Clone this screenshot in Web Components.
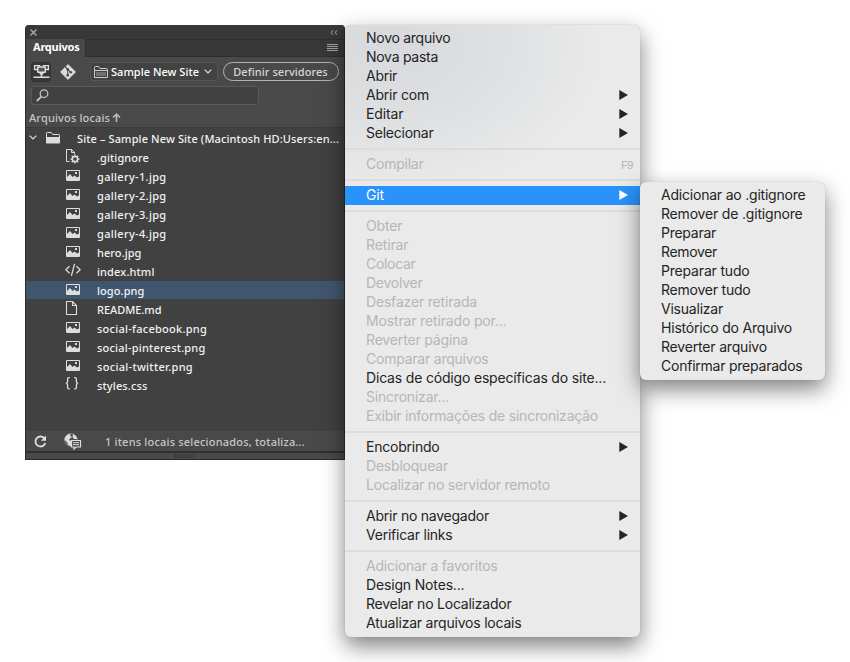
<!DOCTYPE html>
<html lang="pt-BR">
<head>
<meta charset="utf-8">
<title>Arquivos</title>
<style>
body { margin: 0; background: #fff; width: 850px; height: 662px; overflow: hidden; position: relative; }
files-panel { position: absolute; left: 25px; top: 25px; }
context-menu { position: absolute; left: 345px; top: 25px; width: 295px; }
context-menu.sub { left: 640px; top: 182px; width: 185px; }
</style>
</head>
<body>
<files-panel></files-panel>
<context-menu id="main" class="tinted"></context-menu>
<context-menu id="git" class="sub"></context-menu>
<script>
const ICONS = {
  folder: '<svg width="16" height="14" viewBox="0 0 16 14"><path d="M1.500 8V2.300q0-.8.8-.8h4l1.400 2h6q.8 0 .8.800V8" fill="none" stroke="#ddd"/><path d="M1 6h14v5.500q0 1-1 1H2q-1 0-1-1z" fill="#ddd"/></svg>',
  image: '<svg width="14" height="11" viewBox="0 0 14 11"><path d="M.5.5h13v10H.5z" fill="none" stroke="#ddd"/><path d="M1 10V7l3-3 2.500 3L8.500 5.600 11 7.500l2-1V10z" fill="#ddd"/><path d="M9 2h2v2H9z" fill="#ddd"/></svg>',
  gear: '<svg width="15" height="15" viewBox="0 0 15 15"><path d="M4.500 12.500H1.500V.5h5l3 3V5M6.500.5v3h3" fill="none" stroke="#ddd"/><circle cx="10" cy="10" r="2.600" fill="none" stroke="#ddd" stroke-width="1.500"/><path d="M10 5.500V7M10 13v1.500M5.500 10H7M13 10h1.500M6.800 6.800l1.100 1.100M12.100 12.100l1.100 1.100M13.200 6.800l-1.100 1.100M7.900 12.100l-1.100 1.100" stroke="#ddd" stroke-width="1.500"/></svg>',
  code: '<svg width="16" height="14" viewBox="0 0 16 14"><path d="M4.500 3.300L.9 6.800l3.600 3.500M11.500 3.300l3.600 3.500-3.600 3.500M9.600.8L6.400 12.800" fill="none" stroke="#ddd" stroke-width="1.300"/></svg>',
  doc: '<svg width="13" height="14" viewBox="0 0 13 14"><path d="M1.500.5h6l4 4v9h-10zM7.500.5v4h4" fill="none" stroke="#ddd" stroke-width="1.100"/></svg>',
  css: '<svg width="14" height="13" viewBox="0 0 14 13"><path d="M4.800.7H3.900Q2.600.7 2.600 2v2.700Q2.600 6.200.9 6.300q1.700.2 1.700 1.700v2.500q0 1.400 1.300 1.400h.9M9.200.7h.9q1.300 0 1.300 1.300v2.700q0 1.500 1.700 1.600-1.700.2-1.700 1.700v2.500q0 1.400-1.300 1.400h-.9" fill="none" stroke="#ddd" stroke-width="1.300"/></svg>',
  server: '<svg width="17" height="15" viewBox="0 0 17 15"><path d="M4 5.500H1.600V1.600h5V2.500M13 5.500h2.400V1.600h-5V2.500" fill="none" stroke="#ddd" stroke-width="1.300"/><rect x="4.700" y="3" width="7.600" height="5.200" rx=".5" fill="#555" stroke="#ddd" stroke-width="1.500"/><path d="M6 8.500h5l-1 2H7z" fill="#ddd"/><path d="M8.500 9v4M.5 13.300h16" stroke="#ddd" stroke-width="1.600"/></svg>',
  git: '<svg width="16" height="16" viewBox="0 0 16 16"><path d="M8 .4L15.600 8 8 15.600.4 8z" fill="#ddd" stroke="#ddd" stroke-width=".6" stroke-linejoin="round"/><path d="M5.200 2.600l2.500 2.500v6.200M7.700 5.300l3 2.900" fill="none" stroke="#494949" stroke-width="1.100"/><circle cx="7.700" cy="5.300" r="1.300" fill="#494949"/><circle cx="7.700" cy="11.200" r="1.300" fill="#494949"/><circle cx="10.800" cy="8.200" r="1.300" fill="#494949"/></svg>',
  outline: '<svg width="14" height="12" viewBox="0 0 14 12"><path d="M.5 11.500V1.500q0-1 1-1h3.200l1.300 2h6.500q1 0 1 1v8zM.5 4.500h13" fill="none" stroke="#ccc"/><path d="M2 6h10v4H2z" fill="#707070"/></svg>',
  chevron: '<svg width="8" height="5" viewBox="0 0 8 5"><path d="M.7.6L4 3.900 7.300.6" fill="none" stroke="#ddd" stroke-width="1.200"/></svg>',
  search: '<svg width="13" height="13" viewBox="0 0 13 13"><circle cx="8" cy="4.700" r="3.800" fill="none" stroke="#c4c4c4" stroke-width="1.300"/><path d="M5.300 7.600L.8 12" stroke="#c4c4c4" stroke-width="1.800"/></svg>',
  up: '<svg width="9" height="9" viewBox="0 0 9 9"><path d="M4.500 9V1.500M1 4.500l3.500-3.300L8 4.500" fill="none" stroke="#bbb" stroke-width="1.600"/></svg>',
  refresh: '<svg width="13" height="13" viewBox="0 0 13 13"><path d="M10.600 3.600A5 5 0 1 0 11.300 8" fill="none" stroke="#ddd" stroke-width="1.800"/><path d="M12 .6v5.200H6.900z" fill="#ddd"/></svg>',
  globe: '<svg width="18" height="17" viewBox="0 0 18 17"><circle cx="7" cy="7" r="6.300" fill="#505050" stroke="#999" stroke-width=".7"/><path d="M.8 4.500L3.500 1.500 6.500.6l-.6 2L8 4 6 5.500 5 7 7 8v5.300L4 12 3 9 .6 7zM9 1l3 2 1.400 3H10L8.500 4z" fill="#ddd"/><path d="M7.500 7.500h9v6.500h-4.300L10 16v-2H7.500z" fill="#494949" stroke="#ddd" stroke-width="1.200"/><path d="M9 9.700h6M9 11.700h6" stroke="#ddd"/></svg>'
};

/* A single line of text whose tracking is adjusted to fill the width in "w". */
class FitLabel extends HTMLElement {
  connectedCallback() {
    if (!this.shadowRoot) this.attachShadow({ mode: 'open' }).innerHTML =
      '<style>:host{display:inline-block;white-space:nowrap;flex:none}span{display:inline-block;white-space:nowrap}</style><span></span>';
    const text = this.getAttribute('text'), span = this.shadowRoot.querySelector('span');
    span.textContent = text;
    const w = +this.getAttribute('w');
    if (w) {
      span.style.letterSpacing = (w - span.getBoundingClientRect().width) / text.length + 'px';
      span.style.width = w + 1 + 'px';
    }
  }
}
customElements.define('fit-label', FitLabel);

class MenuItem extends HTMLElement {
  connectedCallback() {
    const a = n => this.getAttribute(n) || '';
    this.attachShadow({ mode: 'open' }).innerHTML = `<style>
      :host{display:flex;height:19px;align-items:flex-start;padding:0 6px 0 21px;box-sizing:border-box;color:#242424}
      :host([disabled]){color:#b6b6b6}
      :host([selected]){background:#2a93fb;color:#fff}
      fit-label{line-height:17px}
      .end{margin-left:auto;display:flex;font-size:11px}
      .end fit-label{line-height:20px}
      svg{margin:4px 6px 0 0}
    </style><fit-label text="${a('label')}" w="${a('w')}"></fit-label>
    <span class="end">${a('key') ? `<fit-label text="${a('key')}" w="12"></fit-label>` : ''}${this.hasAttribute('more') ? '<svg width="9" height="10" viewBox="0 0 9 10"><path d="M.3 0L9 5 .3 10z" fill="currentColor"/></svg>' : ''}</span>`;
  }
}
customElements.define('menu-item', MenuItem);

class MenuDivider extends HTMLElement {
  connectedCallback() {
    this.attachShadow({ mode: 'open' }).innerHTML =
      '<style>:host{display:block;height:12px;padding-top:5px;box-sizing:border-box}i{display:block;height:2px;background:#dcdcdc}</style><i></i>';
  }
}
customElements.define('menu-divider', MenuDivider);

const MENUS = {
  main: [['Novo arquivo', 84.5], ['Nova pasta', 72], ['Abrir', 31], ['Abrir com', 63, 'more'], ['Editar', 37.5, 'more'], ['Selecionar', 67.5, 'more'], 0,
    ['Compilar', 57.5, 'disabled key="F9"'], 0, ['Git', 18, 'selected more'], 0,
    ['Obter', 36.5, 'disabled'], ['Retirar', 42.5, 'disabled'], ['Colocar', 49.5, 'disabled'], ['Devolver', 56.5, 'disabled'],
    ['Desfazer retirada', 111, 'disabled'], ['Mostrar retirado por...', 140.5, 'disabled'], ['Reverter página', 102, 'disabled'],
    ['Comparar arquivos', 122.5, 'disabled'], ['Dicas de código específicas do site...', 240], ['Sincronizar...', 83, 'disabled'],
    ['Exibir informações de sincronização', 232, 'disabled'], 0,
    ['Encobrindo', 73.5, 'more'], ['Desbloquear', 82, 'disabled'], ['Localizar no servidor remoto', 184, 'disabled'], 0,
    ['Abrir no navegador', 123, 'more'], ['Verificar links', 86.5, 'more'], 0,
    ['Adicionar a favoritos', 131.5, 'disabled'], ['Design Notes...', 98.5], ['Revelar no Localizador', 145.5], ['Atualizar arquivos locais', 155.5]],
  git: [['Adicionar ao .gitignore', 144.5], ['Remover de .gitignore', 141.5], ['Preparar', 55], ['Remover', 56], ['Preparar tudo', 88.5],
    ['Remover tudo', 89.5], ['Visualizar', 62], ['Histórico do Arquivo', 131], ['Reverter arquivo', 106], ['Confirmar preparados', 141.5]]
};
class ContextMenu extends HTMLElement {
  connectedCallback() {
    this.attachShadow({ mode: 'open' }).innerHTML = `<style>
      :host{display:block;box-sizing:border-box;padding:4px 0;border-radius:6px;background:#eaeaea;
        font:14px Inter,"Liberation Sans",sans-serif;box-shadow:0 9px 22px rgba(0,0,0,.5),0 0 1px rgba(0,0,0,.25)}
      :host(.tinted){background:radial-gradient(ellipse 210px 150px at 50px 20px,#d7d9dc 0,#dddfe1 45%,#eaeaea 100%) #eaeaea}
    </style>` + MENUS[this.id].map(r => r ? `<menu-item label="${r[0]}" w="${r[1]}" ${r[2] || ''}></menu-item>` : '<menu-divider></menu-divider>').join('');
  }
}
customElements.define('context-menu', ContextMenu);

class FileRow extends HTMLElement {
  connectedCallback() {
    const a = n => this.getAttribute(n) || '';
    const root = this.hasAttribute('root');
    this.attachShadow({ mode: 'open' }).innerHTML = `<style>
      :host{display:grid;grid-template-columns:${root ? '19px 32px' : a('icon') === 'image' ? '40px 31px' : '39px 32px'} 1fr;height:19px;color:#f2f2f2}
      :host([selected]){background:linear-gradient(#40566e,#40566e) 0 0/100% 18px no-repeat}
      .tw{padding:6px 0 0 3px;line-height:0}.ic{line-height:0;padding-top:${a('dy') || 3}px}
      fit-label{line-height:20px}
      svg{display:block}
    </style><span class="tw">${root ? ICONS.chevron : ''}</span><span class="ic">${ICONS[a('icon')]}</span><fit-label text="${a('label')}" w="${a('w')}"></fit-label>`;
  }
}
customElements.define('file-row', FileRow);

const FILES = [['.gitignore', 52, 'gear', 1], ['gallery-1.jpg', 69.5, 'image'], ['gallery-2.jpg', 69.5, 'image'], ['gallery-3.jpg', 69.5, 'image'],
  ['gallery-4.jpg', 69.5, 'image'], ['hero.jpg', 44.5, 'image'], ['index.html', 57.5, 'code', 1], ['logo.png', 47.5, 'image'], ['README.md', 64.5, 'doc', 1],
  ['social-facebook.png', 110, 'image'], ['social-pinterest.png', 108.5, 'image'], ['social-twitter.png', 96, 'image'], ['styles.css', 50.5, 'css', 1]];

class FilesPanel extends HTMLElement {
  connectedCallback() {
    this.attachShadow({ mode: 'open' }).innerHTML = `<style>
      :host{display:flex;flex-direction:column;width:320px;height:435px;box-sizing:border-box;border:1px solid #2b2b2b;border-top:0;border-radius:4px 4px 0 0;
        background:#494949;overflow:hidden;font:500 11px "Noto Sans","Open Sans",sans-serif;color:#c6c6c6}
      svg{display:block;flex:none}
      .bar{height:14px;background:#383838;display:flex;justify-content:space-between;align-items:center;padding:1px 6px 0 4px;box-sizing:border-box;flex:none}
      .tabs{height:18px;display:flex;background:#383838;flex:none;box-sizing:border-box}
      .tab{width:59px;background:#494949;color:#fff;font-weight:700;padding-left:7px;box-sizing:border-box;line-height:15px}
      .rest{flex:1;border:solid #2e2e2e;border-width:1px 0 1px 1px;display:flex;justify-content:flex-end;align-items:center;padding-right:6px}
      .tools{height:29px;display:flex;align-items:center;padding-left:5px;box-sizing:border-box;flex:none}
      .sq{width:20px;height:20px;box-sizing:border-box;background:#383838;border:1px solid #333;border-radius:3px;display:grid;place-items:center}
      .git{margin:0 14px 0 9px}
      .drop{width:128px;height:19px;box-sizing:border-box;border:1px solid #565656;border-radius:3px;background:#424242;display:flex;align-items:center;padding:0 5px 0 3px;color:#fff}
      .drop fit-label{margin:0 auto 0 3px}
      .pill{width:116px;height:19px;box-sizing:border-box;border:1px solid #b2b2b2;border-radius:10px;margin-left:5px;display:flex;align-items:center;justify-content:center;color:#d6d6d6}
      .search{width:228px;height:19px;margin:0 0 0 5px;border:1px solid #5a5a5a;border-radius:3px;background:#414141;box-sizing:border-box;display:flex;align-items:center;padding-left:4px;flex:none}
      .head{height:23px;display:flex;align-items:center;gap:1px;padding:3px 0 0 3px;box-sizing:border-box;border-bottom:1px solid #3b3b3b;flex:none}
      .list{background:#414141;height:303px;padding-top:1px;box-sizing:border-box;flex:none}
      .status{height:20px;display:flex;align-items:center;padding-left:8px;flex:none}
      .globe{margin:0 23px 0 17px}
      .grip{flex:1;border-top:2px solid #303030;display:flex;justify-content:center;align-items:center}
      .grip i{width:19px;height:4px;margin-right:2px;background:repeating-linear-gradient(90deg,#353535 0 1px,transparent 1px 2px)}
    </style>
    <div class="bar"><svg width="7" height="7" viewBox="0 0 7 7"><path d="M.5.5l6 6M6.500.5l-6 6" stroke="#b0b0b0" stroke-width="1.200"/></svg>
      <svg width="8" height="5" viewBox="0 0 8 5"><path d="M3.200.3L.9 2.500l2.300 2.200M7.200.3L4.900 2.500l2.300 2.200" fill="none" stroke="#b0b0b0"/></svg></div>
    <div class="tabs"><div class="tab"><fit-label text="Arquivos" w="46.500"></fit-label></div><div class="rest"><svg width="11" height="8" viewBox="0 0 11 8"><path d="M0 .5h11M0 2.500h11M0 4.500h11M0 6.500h11" stroke="#a5a5a5"/></svg></div></div>
    <div class="tools"><span class="sq">${ICONS.server}</span><span class="git">${ICONS.git}</span>
      <span class="drop">${ICONS.outline}<fit-label text="Sample New Site" w="88"></fit-label>${ICONS.chevron}</span>
      <span class="pill"><fit-label text="Definir servidores" w="94.500"></fit-label></span></div>
    <div class="search">${ICONS.search}</div>
    <div class="head"><fit-label text="Arquivos locais" w="81"></fit-label>${ICONS.up}</div>
    <div class="list"><file-row root icon="folder" dy="2" label="Site – Sample New Site (Macintosh HD:Users:en..." w="262"></file-row>
      ${FILES.map(f => `<file-row label="${f[0]}" w="${f[1]}" icon="${f[2]}" dy="${f[3] || 3}" ${f[0] === 'logo.png' ? 'selected' : ''}></file-row>`).join('')}</div>
    <div class="status">${ICONS.refresh}<span class="globe">${ICONS.globe}</span><fit-label text="1 itens locais selecionados, totaliza..." w="200"></fit-label></div>
    <div class="grip"><i></i></div>`;
  }
}
customElements.define('files-panel', FilesPanel);
</script>
</body>
</html>
